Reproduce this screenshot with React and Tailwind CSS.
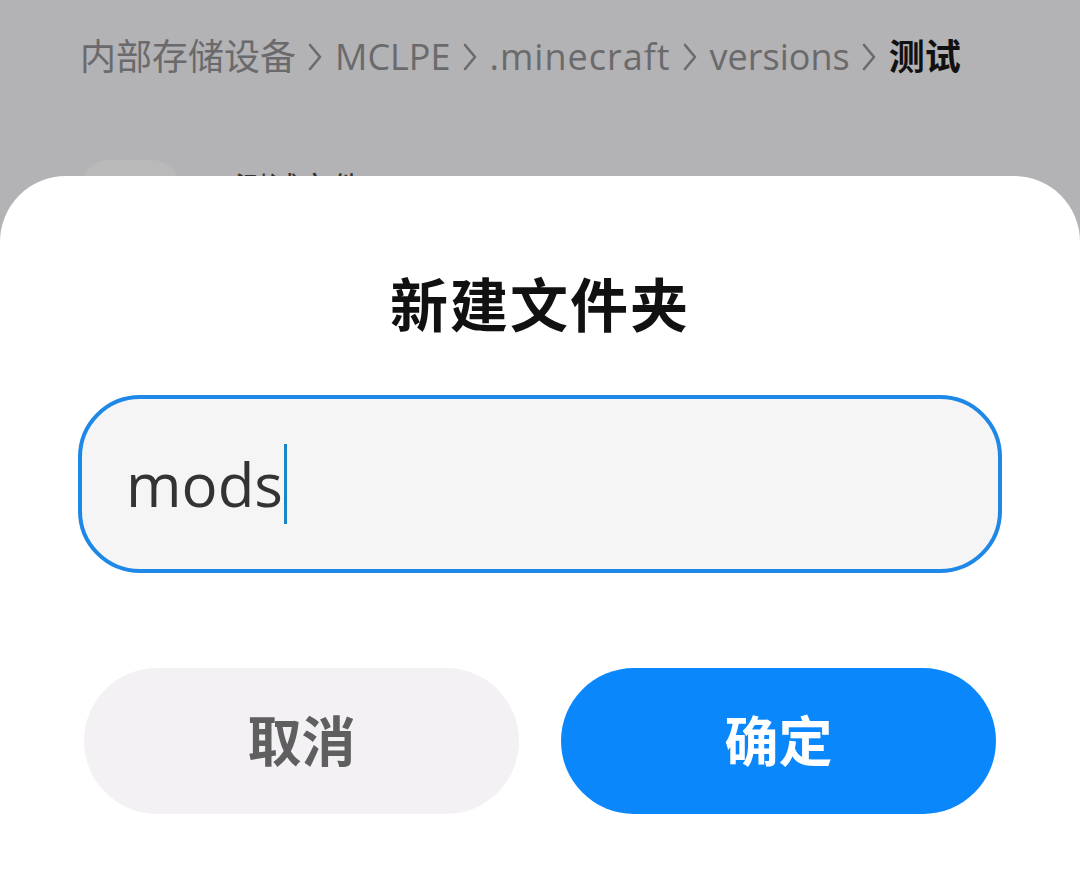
import React from "react";

const Chevron = () => (
  <svg width="16" height="30" viewBox="0 0 16 30" className="ml-[11px] mr-[12px] shrink-0" fill="none">
    <path d="M3 3 L13 15 L3 27" stroke="#6b6b6d" strokeWidth="2.6" strokeLinecap="round" strokeLinejoin="round" />
  </svg>
);

export default function App() {
  const latin = { fontFamily: "'Open Sans', 'Noto Sans CJK SC', sans-serif" };
  return (
    <div className="w-full h-[881px] bg-[#b3b2b5] flex flex-col overflow-hidden" style={latin}>
      <div className="h-[176px] shrink-0 overflow-hidden flex flex-col">
        <div className="h-[114px] shrink-0 pl-[80px] flex items-center text-[36px] text-[#6a6a6c] leading-none whitespace-nowrap">
          <span>内部存储设备</span>
          <Chevron />
          <span>MCLPE</span>
          <Chevron />
          <span className="tracking-[1px]">.minecraft</span>
          <Chevron />
          <span>versions</span>
          <Chevron />
          <span className="text-[#111111] font-bold">测试</span>
        </div>
        <div className="mt-[46px] shrink-0 pl-[80px] flex items-start gap-[55px]">
          <div className="w-[100px] h-[100px] rounded-[28px] bg-[#b9b9ba]" />
          <div className="text-[32px] text-[#333] leading-none mt-[12px]">测试文件</div>
        </div>
      </div>
      <div className="flex-1 bg-white rounded-t-[66px] flex flex-col">
        <div className="pt-[100px] text-center text-[58px] leading-none font-bold text-[#111] tracking-[2px]">
          新建文件夹
        </div>
        <div className="mx-[78px] mt-[61px] h-[178px] rounded-[62px] border-[4px] border-[#1e88e8] bg-[#f5f5f5] flex items-center pl-[44px]">
          <span className="text-[60px] leading-none text-[#333333]">mods</span>
          <span className="w-[3px] h-[80px] bg-[#1a86c8] ml-[1px]" />
        </div>
        <div className="mt-[95px] px-[84px] flex gap-[42px]">
          <button className="flex-1 h-[146px] rounded-full bg-[#f3f1f3] text-[#5f5f5f] text-[54px] font-bold leading-none flex items-center justify-center">
            取消
          </button>
          <button className="flex-1 h-[146px] rounded-full bg-[#0b87fc] text-white text-[54px] font-bold leading-none flex items-center justify-center">
            确定
          </button>
        </div>
      </div>
    </div>
  );
}
